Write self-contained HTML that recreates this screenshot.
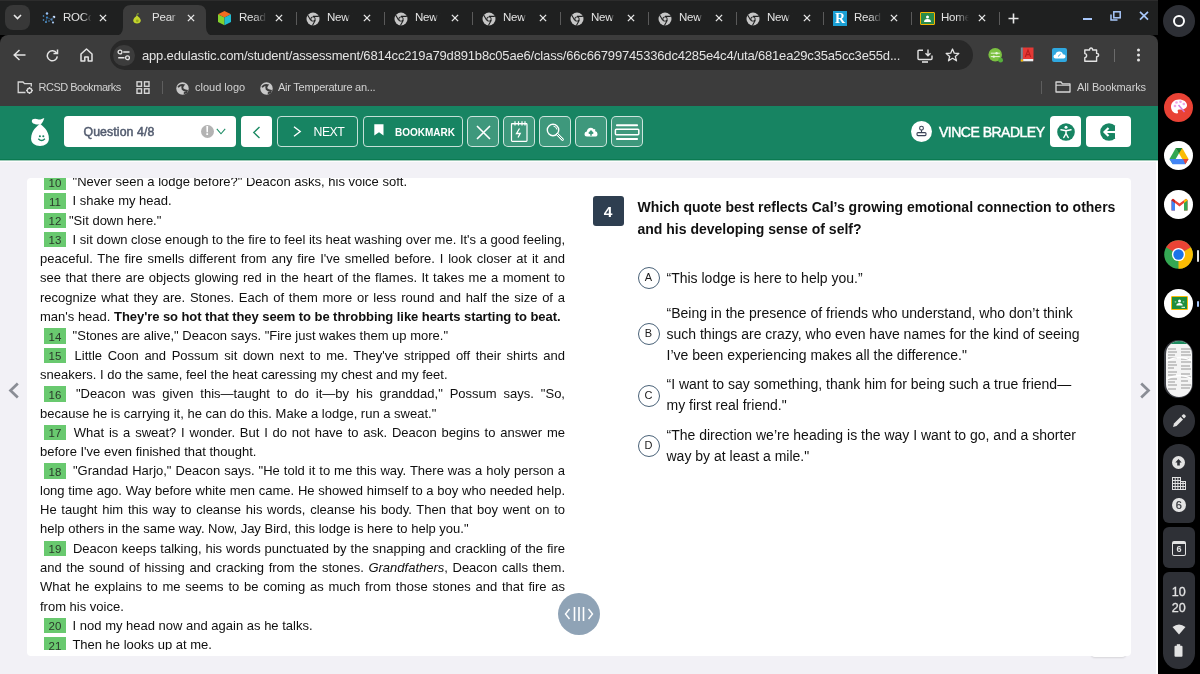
<!DOCTYPE html>
<html><head><meta charset="utf-8">
<style>
*{box-sizing:border-box;margin:0;padding:0}
html,body{width:1200px;height:674px;overflow:hidden;background:#000;font-family:"Liberation Sans",sans-serif}
.abs{position:absolute}
#strip{position:absolute;left:0;top:0;width:1158px;height:35px;background:#1f2020;border-top:1px solid #2c2c2c}
#toolbar{position:absolute;left:0;top:35px;width:1158px;height:71px;background:#3c3c3c;border-radius:8px 8px 0 0}
.tab{position:absolute;top:0;height:35px;color:#e3e3e3;font-size:11.5px}
.tab .t{position:absolute;top:10.2px;white-space:nowrap;overflow:hidden;letter-spacing:-0.2px}
.sep{position:absolute;top:11px;width:1px;height:13px;background:#5a5a5a}
.x{position:absolute;top:14px;width:8px;height:8px}
#page{position:absolute;left:0;top:106px;width:1158px;height:568px;background:#f2f1f6}
#hdr{position:absolute;left:0;top:0;width:1158px;height:53px;background:#178462}
.btnw{position:absolute;top:10px;height:31px;background:#fff;border-radius:4px}
.btno{position:absolute;top:10px;height:31px;border:1.5px solid rgba(255,255,255,.75);border-radius:4px}
.btni{position:absolute;top:10px;height:31px;width:32px;border:1.5px solid rgba(255,255,255,.75);border-radius:5px;background:rgba(255,255,255,.17)}
#card{position:absolute;left:26.5px;top:72px;width:1104.5px;height:478px;background:#fff;border-radius:4px;overflow:hidden}
#pass{position:absolute;left:13.5px;top:-6px;width:525px;font-size:13px;line-height:19.3px;color:#0f0f0f}
#pass .l{white-space:nowrap;text-align:left;height:19.3px}
#pass .j{text-align:justify;text-align-last:justify;white-space:normal;word-spacing:-1.5px}
.n{display:inline-block;width:22px;height:15.5px;line-height:15.5px;background:#69c96f;color:#2b3a2b;font-size:11.5px;text-align:center;text-align-last:center;margin-left:4px;margin-right:3px;vertical-align:1px;position:relative}
.n i{font-style:normal;position:relative;top:1.5px}
.bm{font-size:11px;color:#d2d2d2;white-space:nowrap;letter-spacing:-0.4px;margin-top:1.3px}
#shelf{position:absolute;left:1158px;top:0;width:42px;height:674px;background:#000}
.opt{position:absolute;left:667px;font-size:14px;line-height:20.8px;color:#111;white-space:nowrap}
.circ{position:absolute;left:638px;width:22px;height:22px;border:1.4px solid #4a6278;border-radius:50%;font-size:11px;color:#1a1a1a;text-align:center;line-height:19.5px}
</style></head><body><div id="wrap" style="position:absolute;left:0;top:0;width:1200px;height:674px;will-change:transform">


<!-- TAB STRIP -->
<div id="strip">
  <!-- dropdown -->
  <div class="abs" style="left:5px;top:4px;width:25px;height:25px;border-radius:8px;background:#383838"></div>
  <svg class="abs" style="left:13px;top:13px" width="9" height="6" viewBox="0 0 9 6"><path d="M1 1 L4.5 4.5 L8 1" stroke="#e8e8e8" stroke-width="1.6" fill="none"/></svg>
  <!-- ROCo tab -->
  <svg class="abs" style="left:42px;top:11px" width="14" height="13" viewBox="0 0 14 13">
    <g fill="#5aa7e8"><circle cx="5" cy="1.5" r="1.2" fill="#9cc3f5"/><circle cx="12" cy="5" r="1.3" fill="#c6daf8"/><circle cx="5" cy="5.5" r="1.1" fill="#3a8fd8"/><circle cx="1.5" cy="4" r=".8"/><circle cx="1.5" cy="8" r=".8"/><circle cx="9.5" cy="7.5" r="1" fill="#7fb3ea"/><circle cx="11" cy="10.5" r="1.1" fill="#b5d0f3"/><circle cx="4" cy="10" r=".9"/><circle cx="7" cy="9" r=".7"/></g>
    <path d="M5 5.5 L9.5 7.5 L12 5 M5 5.5 L4 10 M9.5 7.5 L11 10.5" stroke="#3b6ea0" stroke-width=".6" fill="none"/>
  </svg>
  <div class="tab t1" style="left:63px;top:0"><div class="t" style="left:0;width:28px">ROCo</div><div class="abs fade" style="left:19px;top:10px;width:10px;height:14px;background:linear-gradient(90deg,rgba(31,32,32,0),#1f2020)"></div></div>
  <svg class="abs x" style="left:99px;top:13px" width="9" height="9" viewBox="0 0 9 9"><path d="M1 1L8 8M8 1L1 8" stroke="#e8e8e8" stroke-width="1.5"/></svg>

  <!-- active tab -->
  <svg class="abs" style="left:114px;top:4px" width="101" height="31" viewBox="0 0 101 31"><path d="M0 31 Q9 31 9 22 L9 8 Q9 0 17 0 L84 0 Q92 0 92 8 L92 22 Q92 31 101 31 Z" fill="#3c3c3c"/></svg>
  <svg class="abs" style="left:132px;top:12px" width="10" height="11" viewBox="0 0 10 11"><path d="M5 2.2 C3.8 3.8 1.2 5 1.2 7.6 C1.2 9.6 3 10.6 5 10.6 C7 10.6 8.8 9.6 8.8 7.6 C8.8 5 6.2 3.8 5 2.2Z" fill="#c4d62c"/><path d="M4.6 2.4 L5.6 0.6 L6.8 1" stroke="#9bc12a" stroke-width=".9" fill="none"/><circle cx="5.3" cy="7.8" r="1.4" fill="#97a820"/></svg>
  <div class="tab" style="left:152px"><div class="t" style="left:0;width:26px">Pear</div><div class="abs" style="left:18px;top:10px;width:10px;height:14px;background:linear-gradient(90deg,rgba(60,60,60,0),#3c3c3c)"></div></div>
  <svg class="abs x" style="left:187px;top:13px" width="9" height="9" viewBox="0 0 9 9"><path d="M1 1L8 8M8 1L1 8" stroke="#e8e8e8" stroke-width="1.5"/></svg>

  <!-- Reading tab -->
  <svg class="abs" style="left:217px;top:9px" width="15" height="16" viewBox="0 0 15 16"><path d="M7.5 1 L14 4.3 L7.5 7.6 L1 4.3Z" fill="#f26b21"/><path d="M1 4.3 L7.5 7.6 L7.5 15.2 L1 11.9Z" fill="#84d12e"/><path d="M14 4.3 L7.5 7.6 L7.5 15.2 L14 11.9Z" fill="#1fbcd2"/></svg>
  <div class="tab" style="left:239px"><div class="t" style="left:0;width:27px">Readi</div><div class="abs" style="left:15px;top:10px;width:13px;height:14px;background:linear-gradient(90deg,rgba(31,32,32,0),#1f2020)"></div></div>
  <svg class="abs x" style="left:275px;top:13px" width="9" height="9" viewBox="0 0 9 9"><path d="M1 1L8 8M8 1L1 8" stroke="#e8e8e8" stroke-width="1.5"/></svg>
  
  <div class="sep" style="left:296px"></div>
  <svg class="abs" style="left:305.5px;top:11px" width="14" height="14" viewBox="0 0 14 14"><circle cx="7" cy="7" r="6.5" fill="#c6c6c6"/><circle cx="7" cy="7" r="2.6" fill="#1f2020"/><circle cx="7" cy="7" r="1.7" fill="#c6c6c6"/><path d="M7 4.4 H12.8 M4.7 8.3 L1.8 3.3 M9.3 8.3 L6.4 13.4" stroke="#1f2020" stroke-width="1.1"/></svg>
  <div class="tab" style="left:327px"><div class="t" style="left:0;width:28px">New Tab</div><div class="abs" style="left:21px;top:10px;width:8px;height:14px;background:linear-gradient(90deg,rgba(31,32,32,.6),#1f2020 60%)"></div></div>
  <svg class="abs x" style="left:363px;top:13px" width="9" height="9" viewBox="0 0 9 9"><path d="M1 1L8 8M8 1L1 8" stroke="#e8e8e8" stroke-width="1.5"/></svg>
  <div class="sep" style="left:384px"></div>
  <svg class="abs" style="left:393.5px;top:11px" width="14" height="14" viewBox="0 0 14 14"><circle cx="7" cy="7" r="6.5" fill="#c6c6c6"/><circle cx="7" cy="7" r="2.6" fill="#1f2020"/><circle cx="7" cy="7" r="1.7" fill="#c6c6c6"/><path d="M7 4.4 H12.8 M4.7 8.3 L1.8 3.3 M9.3 8.3 L6.4 13.4" stroke="#1f2020" stroke-width="1.1"/></svg>
  <div class="tab" style="left:415px"><div class="t" style="left:0;width:28px">New Tab</div><div class="abs" style="left:21px;top:10px;width:8px;height:14px;background:linear-gradient(90deg,rgba(31,32,32,.6),#1f2020 60%)"></div></div>
  <svg class="abs x" style="left:451px;top:13px" width="9" height="9" viewBox="0 0 9 9"><path d="M1 1L8 8M8 1L1 8" stroke="#e8e8e8" stroke-width="1.5"/></svg>
  <div class="sep" style="left:472px"></div>
  <svg class="abs" style="left:481.5px;top:11px" width="14" height="14" viewBox="0 0 14 14"><circle cx="7" cy="7" r="6.5" fill="#c6c6c6"/><circle cx="7" cy="7" r="2.6" fill="#1f2020"/><circle cx="7" cy="7" r="1.7" fill="#c6c6c6"/><path d="M7 4.4 H12.8 M4.7 8.3 L1.8 3.3 M9.3 8.3 L6.4 13.4" stroke="#1f2020" stroke-width="1.1"/></svg>
  <div class="tab" style="left:503px"><div class="t" style="left:0;width:28px">New Tab</div><div class="abs" style="left:21px;top:10px;width:8px;height:14px;background:linear-gradient(90deg,rgba(31,32,32,.6),#1f2020 60%)"></div></div>
  <svg class="abs x" style="left:539px;top:13px" width="9" height="9" viewBox="0 0 9 9"><path d="M1 1L8 8M8 1L1 8" stroke="#e8e8e8" stroke-width="1.5"/></svg>
  <div class="sep" style="left:560px"></div>
  <svg class="abs" style="left:569.5px;top:11px" width="14" height="14" viewBox="0 0 14 14"><circle cx="7" cy="7" r="6.5" fill="#c6c6c6"/><circle cx="7" cy="7" r="2.6" fill="#1f2020"/><circle cx="7" cy="7" r="1.7" fill="#c6c6c6"/><path d="M7 4.4 H12.8 M4.7 8.3 L1.8 3.3 M9.3 8.3 L6.4 13.4" stroke="#1f2020" stroke-width="1.1"/></svg>
  <div class="tab" style="left:591px"><div class="t" style="left:0;width:28px">New Tab</div><div class="abs" style="left:21px;top:10px;width:8px;height:14px;background:linear-gradient(90deg,rgba(31,32,32,.6),#1f2020 60%)"></div></div>
  <svg class="abs x" style="left:627px;top:13px" width="9" height="9" viewBox="0 0 9 9"><path d="M1 1L8 8M8 1L1 8" stroke="#e8e8e8" stroke-width="1.5"/></svg>
  <div class="sep" style="left:648px"></div>
  <svg class="abs" style="left:657.5px;top:11px" width="14" height="14" viewBox="0 0 14 14"><circle cx="7" cy="7" r="6.5" fill="#c6c6c6"/><circle cx="7" cy="7" r="2.6" fill="#1f2020"/><circle cx="7" cy="7" r="1.7" fill="#c6c6c6"/><path d="M7 4.4 H12.8 M4.7 8.3 L1.8 3.3 M9.3 8.3 L6.4 13.4" stroke="#1f2020" stroke-width="1.1"/></svg>
  <div class="tab" style="left:679px"><div class="t" style="left:0;width:28px">New Tab</div><div class="abs" style="left:21px;top:10px;width:8px;height:14px;background:linear-gradient(90deg,rgba(31,32,32,.6),#1f2020 60%)"></div></div>
  <svg class="abs x" style="left:715px;top:13px" width="9" height="9" viewBox="0 0 9 9"><path d="M1 1L8 8M8 1L1 8" stroke="#e8e8e8" stroke-width="1.5"/></svg>
  <div class="sep" style="left:736px"></div>
  <svg class="abs" style="left:745.5px;top:11px" width="14" height="14" viewBox="0 0 14 14"><circle cx="7" cy="7" r="6.5" fill="#c6c6c6"/><circle cx="7" cy="7" r="2.6" fill="#1f2020"/><circle cx="7" cy="7" r="1.7" fill="#c6c6c6"/><path d="M7 4.4 H12.8 M4.7 8.3 L1.8 3.3 M9.3 8.3 L6.4 13.4" stroke="#1f2020" stroke-width="1.1"/></svg>
  <div class="tab" style="left:767px"><div class="t" style="left:0;width:28px">New Tab</div><div class="abs" style="left:21px;top:10px;width:8px;height:14px;background:linear-gradient(90deg,rgba(31,32,32,.6),#1f2020 60%)"></div></div>
  <svg class="abs x" style="left:803px;top:13px" width="9" height="9" viewBox="0 0 9 9"><path d="M1 1L8 8M8 1L1 8" stroke="#e8e8e8" stroke-width="1.5"/></svg>
  <!-- Read tab -->
  <div class="sep" style="left:823px"></div>
  <div class="abs" style="left:833px;top:10px;width:14px;height:15px;background:#1a9fd4;color:#fff;font-family:'Liberation Serif',serif;font-weight:bold;font-size:14px;line-height:15px;text-align:center">R</div>
  <div class="tab" style="left:854px"><div class="t" style="left:0;width:28px">Read</div><div class="abs" style="left:16px;top:10px;width:12px;height:14px;background:linear-gradient(90deg,rgba(31,32,32,0),#1f2020)"></div></div>
  <svg class="abs x" style="left:890px;top:13px" width="9" height="9" viewBox="0 0 9 9"><path d="M1 1L8 8M8 1L1 8" stroke="#e8e8e8" stroke-width="1.5"/></svg>
  <!-- Home tab -->
  <div class="sep" style="left:911px"></div>
  <div class="abs" style="left:920px;top:11px;width:15px;height:13px;background:#2a8b4a;border:1.6px solid #f4b400;border-radius:1px"></div>
  <svg class="abs" style="left:920px;top:11px" width="15" height="13" viewBox="0 0 15 13"><circle cx="7.5" cy="5" r="1.5" fill="#fff"/><path d="M4 10 Q4 7 7.5 7 Q11 7 11 10Z" fill="#fff"/></svg>
  <div class="tab" style="left:941px"><div class="t" style="left:0;width:28px">Home</div><div class="abs" style="left:15px;top:10px;width:13px;height:14px;background:linear-gradient(90deg,rgba(31,32,32,0),#1f2020)"></div></div>
  <svg class="abs x" style="left:978px;top:13px" width="9" height="9" viewBox="0 0 9 9"><path d="M1 1L8 8M8 1L1 8" stroke="#e8e8e8" stroke-width="1.5"/></svg>
  <div class="sep" style="left:999px"></div>
  <svg class="abs" style="left:1008px;top:12px" width="11" height="11" viewBox="0 0 11 11"><path d="M5.5 0.5V10.5M0.5 5.5H10.5" stroke="#e8e8e8" stroke-width="1.6"/></svg>
  <!-- window controls -->
  <div class="abs" style="left:1083px;top:17px;width:9px;height:2px;background:#a8c7fa"></div>
  <svg class="abs" style="left:1110px;top:10px" width="11" height="10" viewBox="0 0 11 10"><rect x="3.8" y="0.8" width="6.4" height="6" fill="none" stroke="#a8c7fa" stroke-width="1.5"/><path d="M1 3.5V9H7.5" fill="none" stroke="#a8c7fa" stroke-width="1.5"/></svg>
  <svg class="abs" style="left:1139px;top:10px" width="10" height="10" viewBox="0 0 10 10"><path d="M1 0.8L9 8.6M9 0.8L1 8.6" stroke="#a8c7fa" stroke-width="1.7"/></svg>
</div>

<div id="toolbar">
  <svg class="abs" style="left:13px;top:14px" width="13" height="12" viewBox="0 0 13 12"><path d="M6.5 1 L1.2 6 L6.5 11 M1.2 6 H12.5" stroke="#e3e3e3" stroke-width="1.5" fill="none"/></svg>
  <svg class="abs" style="left:46px;top:14px" width="13" height="13" viewBox="0 0 13 13"><path d="M10.6 4.2 A5 5 0 1 0 11.3 7.3" stroke="#e3e3e3" stroke-width="1.5" fill="none"/><path d="M7.5 4.6 H11.5 V0.6" stroke="#e3e3e3" stroke-width="1.5" fill="none"/></svg>
  <svg class="abs" style="left:80px;top:13px" width="13" height="14" viewBox="0 0 13 14"><path d="M1 6 L6.5 1 L12 6 V13 H8.2 V9 H4.8 V13 H1 Z" stroke="#e3e3e3" stroke-width="1.5" fill="none" stroke-linejoin="round"/></svg>
  <div class="abs" style="left:110px;top:5px;width:863px;height:30px;border-radius:15px;background:#282828"></div>
  <div class="abs" style="left:113px;top:9.5px;width:21.5px;height:21.5px;border-radius:50%;background:#3c3c3c"></div>
  <svg class="abs" style="left:117px;top:14px" width="14" height="12" viewBox="0 0 14 12"><circle cx="3" cy="3" r="1.9" stroke="#e3e3e3" stroke-width="1.3" fill="none"/><path d="M6.2 3 H12.5 M1.2 8.8 H7.5" stroke="#e3e3e3" stroke-width="1.4"/><circle cx="10.5" cy="8.8" r="1.9" stroke="#e3e3e3" stroke-width="1.3" fill="none"/></svg>
  <div class="abs" style="left:142px;top:13px;font-size:13px;letter-spacing:-0.17px;color:#e3e3e3;white-space:nowrap">app.edulastic.com/student/assessment/6814cc219a79d891b8c05ae6/class/66c66799745336dc4285e4c4/uta/681ea29c35a5cc3e55d...</div>
  <svg class="abs" style="left:917px;top:14px" width="16" height="14" viewBox="0 0 16 14"><path d="M6 1.2 H2 Q1 1.2 1 2.2 V9.5 Q1 10.5 2 10.5 H14 Q15 10.5 15 9.5 V6.5" stroke="#e3e3e3" stroke-width="1.4" fill="none"/><path d="M11 0.5 V6.5 M8.5 4.2 L11 6.7 L13.5 4.2" stroke="#e3e3e3" stroke-width="1.4" fill="none"/><path d="M5 13 H11" stroke="#e3e3e3" stroke-width="1.6"/></svg>
  <svg class="abs" style="left:945px;top:13px" width="15" height="14" viewBox="0 0 15 14"><path d="M7.5 1 L9.3 5.2 L13.8 5.5 L10.3 8.4 L11.5 12.8 L7.5 10.3 L3.5 12.8 L4.7 8.4 L1.2 5.5 L5.7 5.2 Z" stroke="#e3e3e3" stroke-width="1.3" fill="none" stroke-linejoin="round"/></svg>
  <svg class="abs" style="left:988px;top:13px" width="16" height="15" viewBox="0 0 16 15"><circle cx="7.2" cy="6.8" r="6.8" fill="#7cc242"/><path d="M2.8 5.2H11.8M2.8 8.6H11.8" stroke="#e9f5dc" stroke-width="1"/><circle cx="8.6" cy="5.2" r="1.2" fill="#e9f5dc"/><circle cx="5.8" cy="8.6" r="1.2" fill="#e9f5dc"/><circle cx="12.6" cy="12.2" r="2.4" fill="#56b03c"/></svg>
  <svg class="abs" style="left:1020px;top:12px" width="14" height="15" viewBox="0 0 14 15"><rect x="2.5" y="0.5" width="11" height="13" fill="#e53935"/><rect x="0.8" y="0.5" width="2" height="14" fill="#7b8d99"/><rect x="0.8" y="12.5" width="2.5" height="2" fill="#f4b400"/><rect x="3.2" y="12" width="10" height="2.3" fill="#eceff1"/><path d="M5.3 10 L8 3 L10.7 10 M6.3 7.6 H9.7" stroke="#b71c1c" stroke-width="1.1" fill="none"/></svg>
  <div class="abs" style="left:1052px;top:13px;width:15px;height:14px;background:#2fa8e0;border-radius:2px"></div>
  <svg class="abs" style="left:1052px;top:13px" width="15" height="14" viewBox="0 0 15 14"><path d="M3.5 10.5 Q1.5 10.5 1.5 8.5 Q1.5 6.6 3.5 6.6 Q4 3.5 7.3 3.5 Q10.3 3.5 10.8 6.3 Q13.5 6.3 13.5 8.5 Q13.5 10.5 11.5 10.5Z" fill="#fff"/><path d="M6 8.5 L8.8 5.8" stroke="#2fa8e0" stroke-width="1"/></svg>
  <svg class="abs" style="left:1083px;top:12px" width="17" height="16" viewBox="0 0 17 16"><path d="M1.8 3 H6.6 Q6.6 1 8.1 1 Q9.6 1 9.6 3 H13.6 V6.4 Q15.6 6.4 15.6 8.1 Q15.6 9.8 13.6 9.8 V14.3 H1.8 V10.6 Q3.6 10.6 3.6 8.6 Q3.6 6.6 1.8 6.6 Z" stroke="#e3e3e3" stroke-width="1.4" fill="none" stroke-linejoin="round"/></svg>
  <div class="abs" style="left:1114px;top:14px;width:1px;height:13px;background:#6b6b6b"></div>
  <svg class="abs" style="left:1136px;top:13px" width="5" height="14" viewBox="0 0 5 14"><circle cx="2.5" cy="2" r="1.5" fill="#e3e3e3"/><circle cx="2.5" cy="7" r="1.5" fill="#e3e3e3"/><circle cx="2.5" cy="12" r="1.5" fill="#e3e3e3"/></svg>

  <!-- bookmarks bar -->
  <svg class="abs" style="left:17px;top:46px" width="17" height="13" viewBox="0 0 17 13"><path d="M8.5 11.5 H1.2 V1 H6 L7.5 2.7 H14.3 V5.5" stroke="#d6d6d6" stroke-width="1.3" fill="none"/><circle cx="12.5" cy="9.5" r="2.3" stroke="#d6d6d6" stroke-width="1.4" fill="none"/><path d="M12.5 6 V7.2 M12.5 11.8 V13 M9 9.5 H10.2 M14.8 9.5 H16" stroke="#d6d6d6" stroke-width="1.2"/></svg>
  <div class="abs bm" style="left:38.5px;top:45px;letter-spacing:-0.5px">RCSD Bookmarks</div>
  <svg class="abs" style="left:136px;top:46px" width="14" height="13" viewBox="0 0 14 13"><rect x="1" y="0.8" width="4.5" height="4.5" stroke="#d6d6d6" stroke-width="1.4" fill="none"/><rect x="8.5" y="0.8" width="4.5" height="4.5" stroke="#d6d6d6" stroke-width="1.4" fill="none"/><rect x="1" y="7.8" width="4.5" height="4.5" stroke="#d6d6d6" stroke-width="1.4" fill="none"/><rect x="8.5" y="7.8" width="4.5" height="4.5" stroke="#d6d6d6" stroke-width="1.4" fill="none"/></svg>
  <div class="abs" style="left:162px;top:46px;width:1px;height:13px;background:#5e5e5e"></div>
  <svg class="abs" style="left:176px;top:46.5px" width="13" height="13" viewBox="0 0 13 13"><circle cx="6.5" cy="6.5" r="6.2" fill="#c8c8c8"/><path d="M2.6 4.6 Q4.5 2.6 7.4 3.2 Q5.6 5.2 6.6 7 Q8 8.6 10.8 8.8 Q10.6 10.6 8.6 11" stroke="#3a3a3a" stroke-width="2" fill="none" stroke-linecap="round"/></svg>
  <div class="abs bm" style="left:195px;top:45px;letter-spacing:0px">cloud logo</div>
  <svg class="abs" style="left:260px;top:46.5px" width="13" height="13" viewBox="0 0 13 13"><circle cx="6.5" cy="6.5" r="6.2" fill="#c8c8c8"/><path d="M2.6 4.6 Q4.5 2.6 7.4 3.2 Q5.6 5.2 6.6 7 Q8 8.6 10.8 8.8 Q10.6 10.6 8.6 11" stroke="#3a3a3a" stroke-width="2" fill="none" stroke-linecap="round"/></svg>
  <div class="abs bm" style="left:278px;top:45px;letter-spacing:-0.25px">Air Temperature an...</div>
  <div class="abs" style="left:1041px;top:46px;width:1px;height:13px;background:#5e5e5e"></div>
  <svg class="abs" style="left:1055px;top:46px" width="16" height="12" viewBox="0 0 16 12"><path d="M1 1 H6 L7.5 2.8 H15 V11 H1 Z" stroke="#d6d6d6" stroke-width="1.3" fill="none" stroke-linejoin="round"/><path d="M1 4.2 H15" stroke="#d6d6d6" stroke-width="1.1"/></svg>
  <div class="abs bm" style="left:1077px;top:45px;letter-spacing:-0.1px">All Bookmarks</div>
</div>


<!-- PAGE -->
<div id="page">
  <div class="abs" style="left:0;top:53px;width:1158px;height:1px;background:#0a7a51"></div>
  <div class="abs" style="left:0;top:54px;width:1158px;height:1px;background:#9ccab8"></div>
  <div class="abs" style="left:0;top:55px;width:1156px;height:1px;background:#fdfdfd"></div>
  <div id="hdr">
    <!-- logo -->
    <svg class="abs" style="left:30px;top:11px" width="20" height="30" viewBox="0 0 20 30">
      <path d="M10 6.8 C7 9 1.1 14 1.1 21.5 C1.1 26.3 5 28.9 10 28.9 C15 28.9 18.9 26.3 18.9 21.5 C18.9 14 13 9 10 6.8Z" fill="#fff"/>
      <path d="M10.2 7.6 C6.5 7.8 1.8 6.8 1.8 4.2 C1.8 1.6 5.2 1.2 7.8 2.2 C10 3 12 1.8 14.3 0.9 C13.5 3.5 12.5 6.2 10.2 7.6Z" fill="#fff"/>
      <circle cx="9.9" cy="19.2" r="1.05" fill="#178462"/><circle cx="13.3" cy="19.2" r="1.05" fill="#178462"/>
      <path d="M8.3 21.8 Q11.6 25.2 14.9 21.8" stroke="#178462" stroke-width="1.3" fill="none"/>
    </svg>
    <!-- question dropdown -->
    <div class="btnw" style="left:64px;width:172px"></div>
    <div class="abs" style="left:83.5px;top:19px;font-size:12.3px;color:#535c6f;-webkit-text-stroke:0.5px #535c6f;letter-spacing:0.1px;white-space:nowrap">Question 4/8</div>
    <div class="abs" style="left:200.5px;top:18.5px;width:13.5px;height:13.5px;border-radius:50%;background:#b3b3b3;color:#fff;font-weight:bold;font-size:12px;line-height:13.5px;text-align:center">!</div>
    <svg class="abs" style="left:215.5px;top:22px" width="10" height="7" viewBox="0 0 10 7"><path d="M0.8 0.8 L5 5.8 L9.2 0.8" stroke="#1b8a63" stroke-width="1.05" fill="none"/></svg>
    <!-- prev -->
    <div class="btnw" style="left:241px;width:31px"></div>
    <svg class="abs" style="left:251.5px;top:19.5px" width="9" height="13" viewBox="0 0 9 13"><path d="M7.5 1 L1.8 6.5 L7.5 12" stroke="#1b8a63" stroke-width="1.4" fill="none"/></svg>
    <!-- next -->
    <div class="btno" style="left:277px;width:81px"></div>
    <svg class="abs" style="left:293px;top:20px" width="9" height="11" viewBox="0 0 9 11"><path d="M1 0.8 L7.2 5.5 L1 10.2" stroke="#fff" stroke-width="1.4" fill="none"/></svg>
    <div class="abs" style="left:313.5px;top:19px;font-size:12.3px;color:#fff;letter-spacing:-0.5px">NEXT</div>
    <!-- bookmark -->
    <div class="btno" style="left:363px;width:100px"></div>
    <svg class="abs" style="left:374px;top:18px" width="10" height="12" viewBox="0 0 10 12"><path d="M0.3 0.3 H9.5 V11.5 L5 8.2 L0.3 11.5Z" fill="#fff"/></svg>
    <div class="abs" style="left:395px;top:21px;font-size:10px;font-weight:bold;color:#fff;letter-spacing:0px">BOOKMARK</div>
    <!-- X -->
    <div class="btni" style="left:467px;width:31.5px"></div>
    <svg class="abs" style="left:475.5px;top:18.5px" width="15" height="15" viewBox="0 0 15 15"><path d="M1 1L14 14M14 1L1 14" stroke="#fff" stroke-width="1.6"/></svg>
    <!-- notepad -->
    <div class="btni" style="left:503px"></div>
    <svg class="abs" style="left:510px;top:14px" width="18" height="22" viewBox="0 0 18 22"><rect x="1.5" y="3.6" width="15.5" height="17.8" rx=".8" stroke="#fff" stroke-width="1.2" fill="none"/><path d="M5 1.2 V5.5 M8.5 1.2 V5.5 M12 1.2 V5.5 M15 1.2 V5.5 M1.5 3.6 H17" stroke="#fff" stroke-width="1.2"/><path d="M9.5 8.5 L6.5 13.5 H10.2 L8 17.5" stroke="#fff" stroke-width="1.3" fill="none"/></svg>
    <!-- magnifier -->
    <div class="btni" style="left:539px"></div>
    <svg class="abs" style="left:546px;top:17px" width="18" height="18" viewBox="0 0 18 18"><circle cx="7" cy="7" r="5.7" stroke="#fff" stroke-width="1.4" fill="none"/><path d="M7.5 3.2 A3.6 3.6 0 0 1 10.8 6.5" stroke="#fff" stroke-width="1" fill="none"/><path d="M11.2 11.2 L16.5 16.5" stroke="#fff" stroke-width="2.6" stroke-linecap="round"/><path d="M11.2 11.2 L16.5 16.5" stroke="#3a987a" stroke-width="1" stroke-linecap="round"/></svg>
    <!-- cloud upload -->
    <div class="btni" style="left:575px"></div>
    <svg class="abs" style="left:584px;top:20px" width="14" height="11" viewBox="0 0 14 11"><path d="M3 10.5 Q0.5 10.5 0.5 8 Q0.5 5.8 2.8 5.6 Q3.3 1.8 7 1.8 Q9 1.8 10 3.5 Q10.5 2.5 11.3 3.5 Q11.5 4.3 11 5 Q13.5 5.4 13.5 7.9 Q13.5 10.5 11 10.5Z" fill="#fff"/><path d="M7 9.8 V5.5 M4.8 7.5 L7 5.2 L9.2 7.5" stroke="#3a987a" stroke-width="1.5" fill="none"/></svg>
    <!-- menu -->
    <div class="btni" style="left:611px"></div>
    <svg class="abs" style="left:614px;top:15px" width="26" height="22" viewBox="0 0 26 22"><rect x="2" y="3.3" width="22" height="2" rx=".8" fill="#fff"/><rect x="1.4" y="8.2" width="23.4" height="5.6" rx="1" stroke="#fff" stroke-width="1.5" fill="none"/><rect x="2" y="17" width="22" height="2" rx=".8" fill="#fff"/></svg>
    <!-- user -->
    <div class="abs" style="left:911px;top:15px;width:21px;height:21px;border-radius:50%;background:#fff"></div>
    <svg class="abs" style="left:915px;top:19px" width="13" height="13" viewBox="0 0 13 13"><circle cx="6.5" cy="3.2" r="1.9" stroke="#3a4256" stroke-width="1.1" fill="none"/><path d="M6.5 5.1 V7.3" stroke="#3a4256" stroke-width="1.1"/><rect x="2" y="7.6" width="9" height="3" rx="1" stroke="#3a4256" stroke-width="1.1" fill="none"/></svg>
    <div class="abs" style="left:939px;top:17.5px;font-size:14px;color:#fff;letter-spacing:-0.5px;-webkit-text-stroke:0.45px #fff;white-space:nowrap">VINCE BRADLEY</div>
    <!-- accessibility -->
    <div class="btnw" style="left:1050px;width:31px"></div>
    <svg class="abs" style="left:1056.5px;top:16.5px" width="18" height="18" viewBox="0 0 18 18"><circle cx="9" cy="9" r="8.8" fill="#178462"/><circle cx="9" cy="4.3" r="1.5" fill="#fff"/><path d="M4 6.8 L9 7.8 L14 6.8 M9 7.8 V10.5 L6.8 14.5 M9 10.5 L11.2 14.5" stroke="#fff" stroke-width="1.5" fill="none" stroke-linecap="round" stroke-linejoin="round"/></svg>
    <!-- logout -->
    <div class="btnw" style="left:1086px;width:45px"></div>
    <svg class="abs" style="left:1099.5px;top:16.5px" width="19" height="18" viewBox="0 0 19 18"><circle cx="9" cy="9" r="8.8" fill="#178462"/><path d="M4.5 9 H15.5 M8.5 5 L4.5 9 L8.5 13" stroke="#fff" stroke-width="2.2" fill="none"/><rect x="15" y="3" width="4" height="12" fill="#fff"/><rect x="13.5" y="7.9" width="3" height="2.2" fill="#fff"/></svg>
  </div>
  <div class="abs" style="left:1156px;top:55px;width:2px;height:513px;background:#fff"></div>
  <div class="abs" style="left:1091px;top:546px;width:35px;height:5px;border-radius:0 0 4px 4px;background:#fff;box-shadow:0 1px 2px rgba(0,0,0,.12)"></div>
  <div id="card">
    <div class="abs" style="left:0;top:0;width:560px;height:472px;overflow:hidden"><div id="pass">
      <div class="l"><span class="n"><i>10</i></span> "Never seen a lodge before?" Deacon asks, his voice soft.</div>
      <div class="l"><span class="n"><i>11</i></span> I shake my head.</div>
      <div class="l"><span class="n"><i>12</i></span>"Sit down here."</div>
      <div class="l j"><span class="n"><i>13</i></span> I sit down close enough to the fire to feel its heat washing over me. It's a good feeling,</div>
      <div class="l j">peaceful. The fire smells different from any fire I've smelled before. I look closer at it and</div>
      <div class="l j">see that there are objects glowing red in the heart of the flames. It takes me a moment to</div>
      <div class="l j">recognize what they are. Stones. Each of them more or less round and half the size of a</div>
      <div class="l">man's head. <b style="letter-spacing:-0.06px">They're so hot that they seem to be throbbing like hearts starting to beat.</b></div>
      <div class="l"><span class="n"><i>14</i></span> "Stones are alive," Deacon says. "Fire just wakes them up more."</div>
      <div class="l j"><span class="n"><i>15</i></span> Little Coon and Possum sit down next to me. They've stripped off their shirts and</div>
      <div class="l">sneakers. I do the same, feel the heat caressing my chest and my feet.</div>
      <div class="l j"><span class="n"><i>16</i></span> "Deacon was given this—taught to do it—by his granddad," Possum says. "So,</div>
      <div class="l">because he is carrying it, he can do this. Make a lodge, run a sweat."</div>
      <div class="l j"><span class="n"><i>17</i></span> What is a sweat? I wonder. But I do not have to ask. Deacon begins to answer me</div>
      <div class="l">before I've even finished that thought.</div>
      <div class="l j"><span class="n"><i>18</i></span> "Grandad Harjo," Deacon says. "He told it to me this way. There was a holy person a</div>
      <div class="l j">long time ago. Way before white men came. He showed himself to a boy who needed help.</div>
      <div class="l j">He taught him this way to cleanse his words, cleanse his body. Then that boy went on to</div>
      <div class="l">help others in the same way. Now, Jay Bird, this lodge is here to help you."</div>
      <div class="l j"><span class="n"><i>19</i></span> Deacon keeps talking, his words punctuated by the snapping and crackling of the fire</div>
      <div class="l j">and the sound of hissing and cracking from the stones. <i>Grandfathers</i>, Deacon calls them.</div>
      <div class="l j">What he explains to me seems to be coming as much from those stones and that fire as</div>
      <div class="l">from his voice.</div>
      <div class="l"><span class="n"><i>20</i></span> I nod my head now and again as he talks.</div>
      <div class="l"><span class="n"><i>21</i></span> Then he looks up at me.</div>
    </div></div>
    <div class="abs" style="left:566px;top:18px;width:31px;height:30px;background:#2e3e50;border-radius:3px;color:#fff;font-weight:bold;font-size:15.5px;line-height:32px;text-align:center">4</div>
    <div class="abs" style="left:611px;top:19px;font-size:14px;font-weight:bold;line-height:21.6px;color:#111;white-space:nowrap">Which quote best reflects Cal’s growing emotional connection to others<br>and his developing sense of self?</div>
    <div class="circ" style="left:611px;top:88.5px">A</div>
    <div class="opt" style="left:640px;top:90.3px">“This lodge is here to help you.”</div>
    <div class="circ" style="left:611px;top:145px">B</div>
    <div class="opt" style="left:640px;top:125px">“Being in the presence of friends who understand, who don’t think<br>such things are crazy, who even have names for the kind of seeing<br>I’ve been experiencing makes all the difference."</div>
    <div class="circ" style="left:611px;top:206.5px">C</div>
    <div class="opt" style="left:640px;top:196.4px">“I want to say something, thank him for being such a true friend—<br>my first real friend."</div>
    <div class="circ" style="left:611px;top:257px">D</div>
    <div class="opt" style="left:640px;top:247.2px">“The direction we’re heading is the way I want to go, and a shorter<br>way by at least a mile."</div>
    <!-- resize handle -->
    <div class="abs" style="left:531px;top:415px;width:42px;height:42px;border-radius:50%;background:#8fa3b6"></div>
    <svg class="abs" style="left:536px;top:426px" width="32" height="20" viewBox="0 0 32 20"><path d="M6.5 5 L2.5 10 L6.5 15 M25.5 5 L29.5 10 L25.5 15" stroke="#fff" stroke-width="1.4" fill="none"/><path d="M11.5 3 V17 M16 3 V17 M20.5 3 V17" stroke="#fff" stroke-width="1.6"/></svg>
  </div>
  <!-- side arrows -->
  <svg class="abs" style="left:8px;top:276px" width="12" height="17" viewBox="0 0 12 17"><path d="M9.8 1.5 L2.5 8.5 L9.8 15.5" stroke="#8a8d95" stroke-width="2.7" fill="none"/></svg>
  <svg class="abs" style="left:1139px;top:276px" width="12" height="17" viewBox="0 0 12 17"><path d="M2.2 1.5 L9.5 8.5 L2.2 15.5" stroke="#8a8d95" stroke-width="2.7" fill="none"/></svg>
</div>

<div id="shelf">
  <!-- launcher -->
  <div class="abs" style="left:5px;top:5px;width:32px;height:32px;border-radius:50%;background:#2d2f35"></div>
  <div class="abs" style="left:14.5px;top:14.7px;width:12.3px;height:12.3px;border-radius:50%;border:2px solid #fff"></div>
  <!-- canvas app -->
  <div class="abs" style="left:6.3px;top:92.5px;width:29px;height:29px;border-radius:50%;background:#e94235"></div>
  <svg class="abs" style="left:11px;top:97px" width="20" height="20" viewBox="0 0 20 20"><path d="M10 2.5 C5 2.5 2 6 2 9.8 C2 13.5 4.5 16.5 8 16.5 C9.3 16.5 9.3 15.3 8.8 14.5 C8.3 13.7 8.8 12.5 10 12.5 H12.5 C15.5 12.5 18 10.8 18 8.3 C18 4.8 14.5 2.5 10 2.5Z" fill="#fff"/><circle cx="6" cy="9" r="1.3" fill="#f0a6e6"/><circle cx="7.5" cy="5.5" r="1.3" fill="#f0a6e6"/><circle cx="11.5" cy="4.8" r="1.3" fill="#f0a6e6"/><circle cx="14.8" cy="7" r="1.3" fill="#f0a6e6"/><path d="M9.5 8 L15.5 15" stroke="#d77de0" stroke-width="1.4"/></svg>
  <!-- drive -->
  <div class="abs" style="left:6.3px;top:141.2px;width:29px;height:29px;border-radius:50%;background:#fff"></div>
  <svg class="abs" style="left:11px;top:146.5px" width="20" height="18" viewBox="0 0 20 18"><path d="M6.8 1 H13.2 L19.5 12 L16.3 17.2 Z" fill="#fbbc04"/><path d="M6.8 1 L0.5 12 L3.7 17.2 L10 6.2Z" fill="#34a853"/><path d="M0.5 12 H19.5 L16.3 17.2 H3.7Z" fill="#4285f4"/><path d="M6.8 1 H13.2 L10 6.5Z" fill="#188038"/><path d="M16.3 17.2 L19.5 12 H14Z" fill="#ea4335"/></svg>
  <!-- gmail -->
  <div class="abs" style="left:6.3px;top:190px;width:29px;height:29px;border-radius:50%;background:#fff"></div>
  <svg class="abs" style="left:12.5px;top:198px" width="17" height="13" viewBox="0 0 17 13"><path d="M0.5 2 V12.5 H4 V5 L8.5 8.5 L13 5 V12.5 H16.5 V2 L15 0.8 L8.5 5.5 L2 0.8Z" fill="#ea4335"/><path d="M0.5 2 V12.5 H4 V5Z" fill="#4285f4"/><path d="M13 5 V12.5 H16.5 V2Z" fill="#34a853"/><path d="M16.5 2 L15 0.8 L13 2.3 V5 L16.5 2.5Z" fill="#fbbc04"/><path d="M0.5 2 L2 0.8 L4 2.3 V5 L0.5 2.5Z" fill="#c5221f"/></svg>
  <!-- chrome -->
  <svg class="abs" style="left:6.3px;top:239.5px" width="29" height="29" viewBox="0 0 29 29"><circle cx="14.5" cy="14.5" r="14.3" fill="#34a853"/><path d="M14.5 14.5 L2.1 7.35 A14.3 14.3 0 0 1 26.9 7.35Z" fill="#ea4335"/><path d="M14.5 14.5 L26.9 7.35 A14.3 14.3 0 0 1 14.5 28.8Z" fill="#fbbc04"/><circle cx="14.5" cy="14.5" r="6.6" fill="#fff"/><circle cx="14.5" cy="14.5" r="5.2" fill="#1a73e8"/></svg>
  <div class="abs" style="left:39px;top:249.5px;width:2px;height:12px;background:#e3e3e3;border-radius:1px"></div>
  <!-- classroom -->
  <div class="abs" style="left:6.3px;top:288.5px;width:29px;height:29px;border-radius:50%;background:#fff"></div>
  <div class="abs" style="left:12.5px;top:295.5px;width:17px;height:14px;background:#1e8e3e;border:1.6px solid #fbbc04;border-radius:1px"></div>
  <svg class="abs" style="left:12.5px;top:295.5px" width="17" height="14" viewBox="0 0 17 14"><circle cx="8.5" cy="5" r="1.5" fill="#fff"/><path d="M5.3 9.5 Q5.3 7 8.5 7 Q11.7 7 11.7 9.5Z" fill="#fff"/><circle cx="4.5" cy="5.8" r=".9" fill="#81c995"/><circle cx="12.5" cy="5.8" r=".9" fill="#81c995"/><rect x="10.5" y="10.8" width="3.5" height="1" fill="#fff"/></svg>
  <div class="abs" style="left:39px;top:301px;width:2px;height:6px;background:#a8c7fa;border-radius:1px"></div>
  <!-- tote thumbnail -->
  <div class="abs" style="left:6.3px;top:339.8px;width:29px;height:58px;border-radius:14.5px;background:#3a3c42"></div>
  <div class="abs" style="left:7.5px;top:341px;width:26.6px;height:55.6px;border-radius:13.3px;background:#f4f4f4;overflow:hidden">
    <div class="abs" style="left:0;top:0;width:27px;height:3px;background:#1e8a5f"></div>
    <svg class="abs" style="left:0;top:3px" width="27" height="52" viewBox="0 0 27 52"><g stroke="#6e6e6e" stroke-width=".7">
      <path d="M2 5H10M2 8H11M2 11H9M2 14H11M2 18H10M2 21H11M2 24H8M2 28H11M2 31H10M2 35H11M2 38H9M2 41H11M2 45H10"/>
      <path d="M15 5H25M15 8H24M15 11H25M15 15H23M15 18H25M15 22H24M15 25H25M15 30H24M15 33H25M15 37H22M15 41H25M15 44H24"/></g>
      <path d="M0.5 17 Q13.5 10 26.5 17 M0.5 35 Q13.5 28 26.5 35" stroke="#fff" stroke-width="1.5" fill="none"/>
    </svg>
  </div>
  <!-- pen -->
  <div class="abs" style="left:5px;top:404.7px;width:31.5px;height:32px;border-radius:50%;background:#2e3036"></div>
  <svg class="abs" style="left:13px;top:413px" width="16" height="16" viewBox="0 0 16 16"><path d="M2 14 L3 10.5 L9.5 4 L12 6.5 L5.5 13Z" fill="#e3e3e3"/><path d="M10.5 3 L12 1.5 Q12.8 0.8 13.5 1.5 L14.5 2.5 Q15.2 3.2 14.5 4 L13 5.5Z" fill="#e3e3e3"/></svg>
  <!-- pill 1 -->
  <div class="abs" style="left:5px;top:444px;width:31.5px;height:79px;border-radius:15.7px 15.7px 6px 6px;background:#2e3036"></div>
  <div class="abs" style="left:14px;top:456px;width:13px;height:13px;border-radius:50%;background:#e3e3e3"></div>
  <svg class="abs" style="left:14px;top:456px" width="13" height="13" viewBox="0 0 13 13"><path d="M6.5 3 L3.3 6.5 H5.2 V9.5 H7.8 V6.5 H9.7Z" fill="#2e3036"/></svg>
  <svg class="abs" style="left:14px;top:477px" width="14" height="13" viewBox="0 0 14 13"><g fill="none" stroke="#e3e3e3" stroke-width="1"><rect x=".5" y=".5" width="8" height="12"/><rect x="8.5" y="4.5" width="5" height="8"/><path d="M.5 3.5H8.5M.5 6.5H13.5M.5 9.5H13.5M3.2 .5V12.5M5.9 .5V12.5M11 4.5V12.5"/></g></svg>
  <div class="abs" style="left:14px;top:497.5px;width:13.5px;height:14px;border-radius:50%;background:#e3e3e3;color:#2e3036;font-size:11px;text-align:center;line-height:14px;-webkit-text-stroke:0.2px #2e3036">6</div>
  <!-- pill 2 -->
  <div class="abs" style="left:5px;top:527px;width:31.5px;height:41.3px;border-radius:6px;background:#2e3036"></div>
  <div class="abs" style="left:14px;top:540.5px;width:14px;height:15px;border:1.6px solid #e3e3e3;border-top-width:3px;border-radius:2px;color:#e3e3e3;font-size:9px;font-weight:bold;text-align:center;line-height:10px">6</div>
  <!-- pill 3 -->
  <div class="abs" style="left:5px;top:571.8px;width:31.5px;height:97.5px;border-radius:6px 6px 15.7px 15.7px;background:#2e3036"></div>
  <div class="abs" style="left:5px;top:584px;width:31.5px;text-align:center;color:#e3e3e3;font-size:12.5px;line-height:16px;-webkit-text-stroke:0.3px #e3e3e3">10<br>20</div>
  <svg class="abs" style="left:13.5px;top:623.5px" width="14" height="11" viewBox="0 0 14 11"><path d="M0.5 3 Q7 -2 13.5 3 L7 10.5Z" fill="#e3e3e3"/></svg>
  <svg class="abs" style="left:16px;top:644px" width="9" height="13" viewBox="0 0 9 13"><rect x="2.8" y="0.2" width="3.4" height="1.8" fill="#e3e3e3"/><rect x="0.5" y="1.8" width="8" height="11" rx="1" fill="#e3e3e3"/></svg>
</div>
</div></body></html>
